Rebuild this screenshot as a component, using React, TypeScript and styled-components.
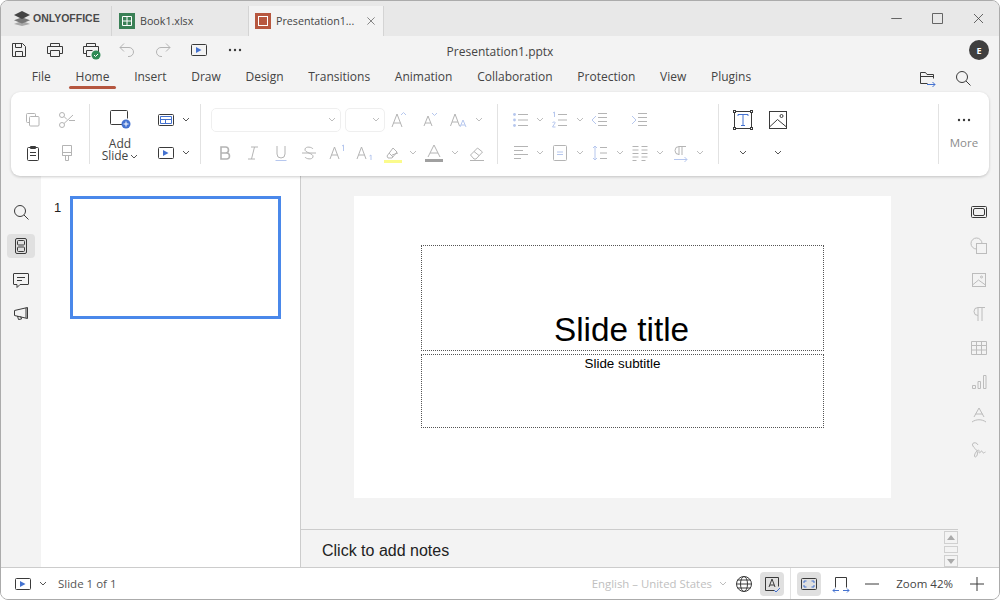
import React from 'react';
import styled, { createGlobalStyle } from 'styled-components';

const Global = createGlobalStyle`
  html, body { margin: 0; padding: 0; background: #fff; }
  body { font-family: "Open Sans", "Noto Sans", sans-serif; font-size: 12px; color: #444; }
  * { box-sizing: border-box; }
`;

const Window = styled.div`
  width: 1000px; height: 600px; display: flex; flex-direction: column; overflow: hidden;
  border: 1px solid #ababab; border-radius: 8px; background: #f3f3f3;
`;
/* title bar */
const TitleBar = styled.div`
  height: 35px; flex: none; display: flex; align-items: flex-end; background: #e8e8e8;
`;
const Logo = styled.div`
  width: 111px; height: 30px; padding: 0 0 6px 12px; display: flex; align-items: center; gap: 2px;
  font: 700 10.5px "Liberation Sans", sans-serif; color: #4a4a4a; border-right: 1px solid #d4d4d4;
`;
const DocTab = styled.div<{ $active?: boolean }>`
  width: 136px; height: 30px; padding: 0 0 0 ${(p) => (p.$active ? 6 : 7)}px; display: flex; align-items: center; gap: 5px;
  font-size: 10.7px; color: #444; white-space: nowrap;
  ${(p) => (p.$active ? 'background:#f3f3f3;border-left:1px solid #d4d4d4;border-right:1px solid #d4d4d4;' : '')}
`;
const DocName = styled.span`flex: 1;`;
const TabClose = styled.span`width: 30px; display: flex; justify-content: center;`;
const WinControls = styled.div`
  margin-left: auto; height: 35px; display: flex; align-items: center;
`;
const WinBtn = styled.div`width: 41px; height: 35px; display: flex; align-items: center; justify-content: center;`;
/* quick row */
const QuickRow = styled.div`
  height: 28px; flex: none; display: flex; align-items: center; position: relative;
`;
const QuickCell = styled.div`width: 36px; display: flex; justify-content: center;`;
const DocTitle = styled.div`
  position: absolute; left: 0; right: 0; top: 0; line-height: 31px; text-align: center;
  font-size: 12px; color: #444;
`;
const Avatar = styled.div`
  margin-left: auto; margin-right: 10px; width: 20px; height: 20px; border-radius: 50%; background: #3f3f3f;
  color: #fff; font-size: 9px; font-weight: 700; display: flex; align-items: center; justify-content: center;
`;
/* ribbon tabs */
const TabsRow = styled.div`
  height: 28px; flex: none; display: flex; align-items: center; padding: 0 0 0 18.5px;
`;
const RibbonTab = styled.div<{ $on?: boolean }>`
  position: relative; padding: 0 12.35px 3px; font-size: 12px; color: #444; white-space: nowrap;
  ${(p) => p.$on && `&::after { content: ""; position: absolute; left: 6px; right: 6px; bottom: -1px; height: 3px; border-radius: 2px; background: #b5563f; }`}
`;
const TabsRight = styled.div`
  margin-left: auto; margin-right: 26px; display: flex; align-items: center; gap: 16px;
`;
/* ribbon card */
const Card = styled.div`
  height: 84px; flex: none; margin: 0 10px; padding: 12px 0 0 5px; display: flex; background: #fff; border-radius: 9px;
  box-shadow: 0 1px 3px rgba(0, 0, 0, 0.2); position: relative; z-index: 1;
`;
const Group = styled.div<{ $w: number; $pad?: number }>`
  width: ${(p) => p.$w}px; padding-left: ${(p) => p.$pad ?? 0}px; height: 60px; flex: none;
  border-right: 1px solid #e2e2e2; display: flex;
`;
const Rows = styled.div`display: flex; flex-direction: column; margin-top: -1px;`;
const Row = styled.div`height: 33px; flex: none; display: flex; align-items: center;`;
const Cell = styled.div<{ $w: number }>`
  width: ${(p) => p.$w}px; flex: none; display: flex; align-items: center; justify-content: center;
`;
const Combo = styled.div<{ $w: number }>`
  width: ${(p) => p.$w}px; height: 24px; flex: none; margin-right: ${(p) => (p.$w > 100 ? 4 : 0)}px;
  border: 1px solid #efefef; border-radius: 5px; display: flex; align-items: center; justify-content: flex-end; padding-right: 4px;
`;
const AddSlide = styled.div`
  width: 44px; margin-right: 12px; margin-top: -1px; padding-top: 4px; display: flex; flex-direction: column; align-items: center;
  font-size: 12px; line-height: 12px; color: #444;
`;
const AddLabel = styled.div`margin-top: 7px; display: flex; flex-direction: column; align-items: center;`;
const AddLine = styled.span`display: flex; align-items: center; gap: 2px; height: 12px;`;
const MoreBtn = styled.div`
  width: 50px; height: 60px; padding-top: 6px; display: flex; flex-direction: column; align-items: center; gap: 5px;
  font-size: 11.5px; color: #8c8c8c;
`;
/* work area */
const Work = styled.div`flex: 1; min-height: 0; display: flex;`;
const LeftRail = styled.div`
  width: 40px; flex: none; padding: 24px 0 0 6px; display: flex; flex-direction: column; gap: 10px;
`;
const RailBtn = styled.div<{ $on?: boolean }>`
  width: 28px; height: 24px; border-radius: 4px; display: flex; align-items: center; justify-content: center;
  background: ${(p) => (p.$on ? '#e0e0e0' : 'transparent')};
`;
const Thumbs = styled.div`
  width: 260px; flex: none; padding: 20px 0 0 13px; display: flex; background: #fff; border-right: 1px solid #ccc;
`;
const ThumbNum = styled.div`
  width: 16px; font: 13px/24px "Liberation Sans", sans-serif; color: #222;
`;
const Thumb = styled.div`
  width: 211px; height: 123px; background: #fff; border: 3px solid #4a88ea;
`;
const Center = styled.div`flex: 1; min-width: 0; display: flex; flex-direction: column;`;
const Canvas = styled.div`
  flex: 1; min-height: 0; padding: 20px 14px 0 0; display: flex; justify-content: center; align-items: flex-start;
`;
const Slide = styled.div`
  width: 537px; height: 302px; padding-top: 49px; background: #fff; display: flex; flex-direction: column; align-items: center;
  font-family: "Liberation Sans", sans-serif; color: #000;
`;
const TitleBox = styled.div`
  width: 403px; height: 106px; border: 1px dotted #555; display: flex; align-items: flex-end; justify-content: center;
  font-size: 33.3px; line-height: 40px; padding-right: 2px;
`;
const SubBox = styled.div`
  width: 403px; height: 74px; margin-top: 3px; border: 1px dotted #555; text-align: center; font-size: 13.4px; line-height: 18px;
`;
const Notes = styled.div`
  height: 38px; flex: none; border-top: 1px solid #ccc; display: flex;
  font: 16px/41px "Liberation Sans", sans-serif; color: #222;
`;
const NotesText = styled.div`flex: 1; padding-left: 21px;`;
const NoteScroll = styled.div`
  width: 14px; flex: none; padding-top: 1px; display: flex; flex-direction: column; gap: 2px;
`;
const ScrollBtn = styled.div<{ $h: number }>`
  height: ${(p) => p.$h}px; border: 1px solid #d0d0d0; display: flex; align-items: center; justify-content: center;
`;
const RightRail = styled.div`
  width: 41px; flex: none; padding: 26px 0 0 11px; display: flex; flex-direction: column; gap: 14px;
`;
/* status bar */
const StatusBar = styled.div`
  height: 32px; flex: none; background: #fff; border-top: 1px solid #ccc; display: flex; align-items: center; color: #555; font-size: 11.5px;
`;
const StatusLeft = styled.div`display: flex; align-items: center; padding-left: 12px;`;
const SlideCount = styled.span`margin-left: 5px;`;
const StatusRight = styled.div`margin-left: auto; display: flex; align-items: center; height: 100%;`;
const Lang = styled.span`color: #c0c0c0; margin-right: 6px; white-space: nowrap; font-size: 11.4px;`;
const StatusBtn = styled.div<{ $on?: boolean; $w?: number }>`
  width: ${(p) => p.$w ?? 24}px; height: 24px; border-radius: 4px; display: flex; align-items: center; justify-content: center;
  background: ${(p) => (p.$on ? '#e0e0e0' : 'transparent')};
`;
const StatusSep = styled.div`width: 1px; height: 100%; background: #e2e2e2; margin: 0 6px 0 6px;`;
const ZoomLabel = styled.span`width: 76px; padding-right: 6px; text-align: right; color: #444;`;

const Svg = styled.svg<{ $tone?: string }>`
  display: block; flex: none; fill: none; stroke: currentColor; stroke-width: 1;
  color: ${(p) => (p.$tone === 'muted' ? '#b4b4b4' : p.$tone === 'rail' ? '#bcbcbc' : '#3a3a3a')};
  --accent: ${(p) => (p.$tone === 'muted' ? '#b6c7ee' : '#4472d0')};
  .a { stroke: var(--accent); }
  .f { fill: var(--accent); stroke: none; }
  .k { fill: currentColor; stroke: none; }
`;

const paths: Record<string, React.ReactNode> = {
  save: <><path d="M3.5 3.5h10l3 3v10h-13z" /><path d="M6.5 3.5v4h6v-4M6.5 16.5v-5h7v5" /></>,
  print: <><path d="M5.5 6.5v-3h9v3M5.5 13.5h-3v-7h15v7h-3" /><path d="M5.5 10.5h9v6h-9z" /></>,
  printok: <><path d="M5.5 6.5v-3h9v3M5.5 13.5h-3v-7h15v7h-2" /><path d="M5.5 10.5h6M5.5 10.5v6h4" /><circle cx="15" cy="15" r="4.5" fill="#2f8a55" stroke="none" /><path d="M13 15l1.5 1.5 2.5-2.5" stroke="#fff" /></>,
  undo: <><path d="M7 3.5l-4 4 4 4" /><path d="M3 7.5h9a4.5 4.5 0 0 1 0 9h-1" /></>,
  redo: <><path d="M13 3.5l4 4-4 4" /><path d="M17 7.5h-9a4.5 4.5 0 0 0 0 9h1" /></>,
  play: <><rect x="2.5" y="4.5" width="15" height="11" rx="1" /><path className="f" d="M7 7l5.5 3-5.5 3z" /></>,
  dots: <><circle className="k" cx="5" cy="10" r="1.2" /><circle className="k" cx="10" cy="10" r="1.2" /><circle className="k" cx="15" cy="10" r="1.2" /></>,
  search: <><circle cx="9" cy="9" r="5.5" /><path d="M13 13l4.5 4.5" /></>,
  folder: <><path d="M3.5 15.5v-11h5l1.5 2h6.5v4M3.5 8.5h13M3.5 15.5h7" /><path className="a" d="M10 16.5h8M15.5 14l2.5 2.5-2.5 2.5" /></>,
  copy: <><path d="M12.5 6.5v-2a1 1 0 0 0-1-1h-7a1 1 0 0 0-1 1v7a1 1 0 0 0 1 1h2" /><rect x="6.5" y="6.5" width="9.5" height="9.5" rx="1" /></>,
  cut: <><circle cx="5" cy="5" r="2.5" /><circle cx="5" cy="15" r="2.5" /><path d="M7 13.5L16 5M7 6.5l3 3M12 10.5h6" /></>,
  paste: <><rect x="4.5" y="4.5" width="11" height="13" rx="1" /><path d="M7.5 3.5h5v2h-5zM7 9.5h6M7 12.5h6" /></>,
  brush: <><path d="M5.5 2.5h9v10h-9zM5.5 9.5h9M5.5 12.5h3v5h3v-5h3" /></>,
  layout: <><rect x="2.5" y="4.5" width="15" height="11" rx="1" /><path className="a" d="M4.5 6.5h11v7h-11zM4.5 9.5h11M9.5 9.5v4" /></>,
  bold: <path strokeWidth="1.6" d="M6 4h4.5a3 3 0 0 1 0 6H6zM6 10h5.5a3 3 0 0 1 0 6H6z" />,
  italic: <path d="M8 4h7M5 16h7M11.5 4L8.5 16" />,
  under: <><path d="M6 3v8a4 4 0 0 0 8 0V3" /><path className="a" d="M4.5 17.5h11" /></>,
  strike: <path d="M14 6c-1-2-7-3-8 0-1 4 9 4 8 8-1 3-7 2-8 0M3 10h14" />,
  sup: <><path d="M3 16l4.5-12L12 16M4.5 12h6" /><path className="a" d="M15 3l1.5-1v6" /></>,
  sub: <><path d="M2 16l4.5-12L11 16M3.5 12h6" /><path className="a" d="M14.5 13l1.5-1v5" /></>,
  grow: <><path d="M2 17l5-13 5 13M3.5 13h7" /><path className="a" d="M11 5l2.5-2.5L16 5" /></>,
  shrink: <><path d="M4 16l4-10 4 10M5 13h6" /><path className="a" d="M12 3l2.5 2.5L17 3" /></>,
  caseA: <><path d="M1.5 16l4.5-12 4.5 12M3 12h6" /><path className="a" d="M11 17l3-7 3 7M12 15h4" /></>,
  high: <><path d="M4 13l6-8 4 4-5 6H5zM6 10l4 4M9 12l6-2" /><rect x="1" y="17" width="18" height="3" fill="#fbfb8c" stroke="none" /></>,
  color: <><path d="M4 14L10 2l6 12M6 10h8" /><rect x="1" y="16" width="18" height="3" fill="#a0a0a0" stroke="none" /></>,
  erase: <path d="M3.5 12l7-7 5 4-6.5 7H7zM7 8.5l5 4M3 17.5h14" />,
  bullets: <><circle className="f" cx="3.5" cy="4.5" r="1.4" /><circle className="f" cx="3.5" cy="10" r="1.4" /><circle className="f" cx="3.5" cy="15.5" r="1.4" /><path d="M7 4.5h10M7 10h10M7 15.5h10" /></>,
  numbers: <><path className="a" d="M3 3l1.5-1v5M2.5 13c1-2 3-1 2.5 0l-2.5 4h3" /><path d="M8 4.5h9M8 10h9M8 15.5h9" /></>,
  outdent: <><path className="a" d="M6 6l-4 4 4 4" /><path d="M8 3.5h9M8 7.5h9M8 11.5h9M8 15.5h9" /></>,
  indent: <><path className="a" d="M2 6l4 4-4 4" /><path d="M8 3.5h9M8 7.5h9M8 11.5h9M8 15.5h9" /></>,
  align: <path d="M3 3.5h14M3 7.5h9M3 11.5h14M3 15.5h7" />,
  valign: <><rect x="3.5" y="2.5" width="13" height="15" rx="1" /><path className="a" d="M7 9h6M7 11.5h6" /></>,
  spacing: <><path className="a" d="M5 3v14M3 5l2-2 2 2M3 15l2 2 2-2" /><path d="M10 4.5h7M10 10h7M10 15.5h7" /></>,
  cols: <path d="M2.5 3.5h6M11.5 3.5h6M2.5 7h6M11.5 7h6M2.5 10.5h6M11.5 10.5h6M2.5 14h6M11.5 14h6M2.5 17.5h4M11.5 17.5h4" />,
  para: <><path d="M9 12V3.5h7M9 3.5a4 4 0 0 0 0 8M12 3.5V12" /><path className="a" d="M4 16.5h13M14.5 14l2.5 2.5-2.5 2.5" /></>,
  textbox: <><rect x="1.5" y="1.5" width="17" height="17" /><rect x=".5" y=".5" width="2" height="2" fill="#fff" /><rect x="17.5" y=".5" width="2" height="2" fill="#fff" /><rect x=".5" y="17.5" width="2" height="2" fill="#fff" /><rect x="17.5" y="17.5" width="2" height="2" fill="#fff" /><path className="a" d="M5 6V4.5h10V6M10 4.5v10.500M8 15.500h4" /></>,
  image: <><rect x="1.5" y="1.5" width="17" height="17" /><circle cx="13.5" cy="6" r="1.5" /><path d="M1.5 17l8-7.500 9 7.500" /></>,
  rail2: <><rect x="4.5" y="2.5" width="11" height="15" rx="1.5" /><rect x="6.5" y="4.5" width="7" height="4.5" rx="1" /><rect x="6.5" y="11" width="7" height="4.5" rx="1" /></>,
  comment: <path d="M3 3.5h14a.5.5 0 0 1 .5.5v10a.5.5 0 0 1-.5.5H9l-3 3v-3H3a.5.5 0 0 1-.5-.5V4a.5.5 0 0 1 .5-.5zM6 7.5h8M6 10.5h5" />,
  horn: <path d="M16.5 3.5v11l-13-3v-5zM15 3.900v10M6.5 12l1 3.5 3-.5-.8-2.600" />,
  slideProps: <><rect x="2.5" y="4.5" width="15" height="11" rx="1" /><rect x="4.5" y="6.5" width="11" height="7" rx="1.5" /></>,
  shape: <><circle cx="7.5" cy="7.5" r="5.5" /><rect x="7.5" y="7.5" width="10" height="10" fill="#f3f3f3" /></>,
  picture: <><rect x="3.5" y="3.5" width="13" height="13" /><circle cx="12.5" cy="7" r="1" /><path d="M3.5 15l6-5 7 5" /></>,
  pilcrow: <path d="M9 17V3.5h7M9 3.5a4 4 0 0 0 0 8M13 3.5V17" />,
  table: <path d="M2.5 3.5h15v13h-15zM2.5 7.5h15M2.5 12h15M7.5 3.5v13M12.5 3.5v13" />,
  chart: <path d="M3.5 13.5h3v3h-3zM9 9.5h2.5v7H9zM14.5 3.5h2.5v13h-2.5z" />,
  art: <path d="M5 11l5-9 5 9M6.5 8h7M3 16c4-3 10-3 14 0" />,
  sign: <path d="M9 5C8 2 3 2 3.5 5c.5 3 5 4 5 8 0 4-3 5-3 3 0-3 3-6 4-6s0 3 1 3 1-2 2-2 1 2 2 2 1-1 2-1" />,
  fit: <><rect x="2.5" y="4.5" width="15" height="11" rx="1" /><path className="a" d="M5 9V7h2.500M12.500 7H15v2M15 11v2h-2.500M7.500 13H5v-2" /></>,
  fitw: <><path d="M4.5 13.5v-10h11v10" /><path className="a" d="M2 16.5h6M2 16.5l2-2M2 16.5l2 2M12 16.5h6M18 16.5l-2-2M18 16.5l-2 2" /></>,
  globe: <><circle cx="10" cy="10" r="7.5" /><ellipse cx="10" cy="10" rx="3.5" ry="7.5" /><path d="M2.5 10h15M3.5 6h13M3.5 14h13" /></>,
  spell: <><path d="M12 16.5H3.5v-13h13v9" /><path d="M7 13l3-8 3 8M8 11h4" /><path className="a" d="M12 16l2 2 4-4" /></>,
  minus: <path d="M3 10h14" />,
  plus: <path d="M3 10h14M10 3v14" />,
  close: <path d="M4 4l12 12M16 4L4 16" />,
  square: <rect x="3.5" y="3.5" width="13" height="13" />,
};

function Icon({ n, tone, size = 20 }: { n: string; tone?: string; size?: number }) {
  return (
    <Svg $tone={tone} width={size} height={size} viewBox="0 0 20 20">
      {paths[n]}
    </Svg>
  );
}

function Chev({ muted }: { muted?: boolean }) {
  return (
    <svg width="8" height="5" viewBox="0 0 8 5" fill="none" stroke={muted ? '#bdbdbd' : '#555'} style={{ display: 'block' }}>
      <path d="M1 1l3 3 3-3" />
    </svg>
  );
}

function LogoMark() {
  return (
    <svg width="18" height="16" viewBox="0 0 18 16">
      <path d="M9 10.8L1 14l8 2 8-2z" fill="#a8a8a8" />
      <path d="M9 7.2L1 10.2l8 3.3 8-3.3z" fill="#777" />
      <path d="M9 1L1 5l8 4 8-4z" fill="#444" />
    </svg>
  );
}

function SheetIcon() {
  return (
    <svg width="16" height="16" viewBox="0 0 16 16" style={{ flex: 'none' }}>
      <rect width="16" height="16" fill="#3a8056" />
      <path d="M3.5 3.5h9v9h-9zM3.5 8h9M8 3.5v9" fill="none" stroke="#fff" />
    </svg>
  );
}

function DeckIcon() {
  return (
    <svg width="16" height="16" viewBox="0 0 16 16" style={{ flex: 'none' }}>
      <rect width="16" height="16" fill="#b7573f" />
      <rect x="3.5" y="3.5" width="9" height="9" fill="none" stroke="#fff" />
    </svg>
  );
}

function AddIcon() {
  return (
    <svg width="24" height="24" viewBox="0 0 24 24" fill="none">
      <path d="M14 17.5H3.5a1 1 0 0 1-1-1v-12a1 1 0 0 1 1-1h15a1 1 0 0 1 1 1v7" stroke="#3a3a3a" />
      <circle cx="18" cy="17" r="4.5" fill="#4472d0" />
      <path d="M15.5 17h5M18 14.5v5" stroke="#fff" />
    </svg>
  );
}

const ScrollArrow = styled.span<{ $up?: boolean }>`
  width: 0; height: 0; border-left: 4px solid transparent; border-right: 4px solid transparent;
  ${(p) => (p.$up ? 'border-bottom: 5px solid #aaa;' : 'border-top: 5px solid #aaa;')}
`;

const ribbon = ['File', 'Home', 'Insert', 'Draw', 'Design', 'Transitions', 'Animation', 'Collaboration', 'Protection', 'View', 'Plugins'];
const quick: [string, string?][] = [['save'], ['print'], ['printok'], ['undo', 'muted'], ['redo', 'muted'], ['play'], ['dots']];
const rightRail = ['shape', 'picture', 'pilcrow', 'table', 'chart', 'art', 'sign'];

export default function App() {
  return (
    <>
      <Global />
      <Window>
        <TitleBar>
          <Logo>
            <LogoMark />
            <span>ONLYOFFICE</span>
          </Logo>
          <DocTab>
            <SheetIcon />
            <DocName>Book1.xlsx</DocName>
          </DocTab>
          <DocTab $active>
            <DeckIcon />
            <DocName>Presentation1...</DocName>
            <TabClose><Icon n="close" size={12} /></TabClose>
          </DocTab>
          <WinControls>
            <WinBtn><Icon n="minus" size={15} /></WinBtn>
            <WinBtn><Icon n="square" size={15} /></WinBtn>
            <WinBtn><Icon n="close" size={15} /></WinBtn>
          </WinControls>
        </TitleBar>

        <QuickRow>
          {quick.map(([n, tone]) => (
            <QuickCell key={n}><Icon n={n} tone={tone} /></QuickCell>
          ))}
          <DocTitle>Presentation1.pptx</DocTitle>
          <Avatar>E</Avatar>
        </QuickRow>

        <TabsRow>
          {ribbon.map((t) => (
            <RibbonTab key={t} $on={t === 'Home'}>{t}</RibbonTab>
          ))}
          <TabsRight>
            <Icon n="folder" />
            <Icon n="search" />
          </TabsRight>
        </TabsRow>

        <Card>
          <Group $w={74}>
            <Rows>
              <Row>
                <Cell $w={34}><Icon n="copy" tone="muted" /></Cell>
                <Cell $w={34}><Icon n="cut" tone="muted" /></Cell>
              </Row>
              <Row>
                <Cell $w={34}><Icon n="paste" /></Cell>
                <Cell $w={34}><Icon n="brush" tone="muted" /></Cell>
              </Row>
            </Rows>
          </Group>
          <Group $w={111} $pad={8}>
            <AddSlide>
              <AddIcon />
              <AddLabel>
                <AddLine>Add</AddLine>
                <AddLine>Slide <Chev /></AddLine>
              </AddLabel>
            </AddSlide>
            <Rows>
              <Row>
                <Cell $w={24}><Icon n="layout" /></Cell>
                <Cell $w={16}><Chev /></Cell>
              </Row>
              <Row>
                <Cell $w={24}><Icon n="play" /></Cell>
                <Cell $w={16}><Chev /></Cell>
              </Row>
            </Rows>
          </Group>
          <Group $w={297} $pad={10}>
            <Rows>
              <Row>
                <Combo $w={130}><Chev muted /></Combo>
                <Combo $w={40}><Chev muted /></Combo>
                <Cell $w={30}><Icon n="grow" tone="muted" /></Cell>
                <Cell $w={29}><Icon n="shrink" tone="muted" /></Cell>
                <Cell $w={30}><Icon n="caseA" tone="muted" /></Cell>
                <Cell $w={10}><Chev muted /></Cell>
              </Row>
              <Row>
                <Cell $w={28}><Icon n="bold" tone="muted" /></Cell>
                <Cell $w={28}><Icon n="italic" tone="muted" /></Cell>
                <Cell $w={28}><Icon n="under" tone="muted" /></Cell>
                <Cell $w={28}><Icon n="strike" tone="muted" /></Cell>
                <Cell $w={28}><Icon n="sup" tone="muted" /></Cell>
                <Cell $w={28}><Icon n="sub" tone="muted" /></Cell>
                <Cell $w={28}><Icon n="high" tone="muted" /></Cell>
                <Cell $w={12}><Chev muted /></Cell>
                <Cell $w={30}><Icon n="color" tone="muted" /></Cell>
                <Cell $w={12}><Chev muted /></Cell>
                <Cell $w={32}><Icon n="erase" tone="muted" /></Cell>
              </Row>
            </Rows>
          </Group>
          <Group $w={221} $pad={9}>
            <Rows>
              <Row>
                <Cell $w={28}><Icon n="bullets" tone="muted" /></Cell>
                <Cell $w={10}><Chev muted /></Cell>
                <Cell $w={30}><Icon n="numbers" tone="muted" /></Cell>
                <Cell $w={10}><Chev muted /></Cell>
                <Cell $w={30}><Icon n="outdent" tone="muted" /></Cell>
                <Cell $w={10} />
                <Cell $w={30}><Icon n="indent" tone="muted" /></Cell>
              </Row>
              <Row>
                <Cell $w={28}><Icon n="align" tone="muted" /></Cell>
                <Cell $w={10}><Chev muted /></Cell>
                <Cell $w={30}><Icon n="valign" tone="muted" /></Cell>
                <Cell $w={10}><Chev muted /></Cell>
                <Cell $w={30}><Icon n="spacing" tone="muted" /></Cell>
                <Cell $w={10}><Chev muted /></Cell>
                <Cell $w={30}><Icon n="cols" tone="muted" /></Cell>
                <Cell $w={10}><Chev muted /></Cell>
                <Cell $w={30}><Icon n="para" tone="muted" /></Cell>
                <Cell $w={10}><Chev muted /></Cell>
              </Row>
            </Rows>
          </Group>
          <Group $w={220} $pad={6}>
            <Rows>
              <Row>
                <Cell $w={35}><Icon n="textbox" /></Cell>
                <Cell $w={35}><Icon n="image" /></Cell>
              </Row>
              <Row>
                <Cell $w={35}><Chev /></Cell>
                <Cell $w={35}><Chev /></Cell>
              </Row>
            </Rows>
          </Group>
          <MoreBtn>
            <Icon n="dots" />
            <span>More</span>
          </MoreBtn>
        </Card>

        <Work>
          <LeftRail>
            <RailBtn><Icon n="search" /></RailBtn>
            <RailBtn $on><Icon n="rail2" /></RailBtn>
            <RailBtn><Icon n="comment" /></RailBtn>
            <RailBtn><Icon n="horn" /></RailBtn>
          </LeftRail>
          <Thumbs>
            <ThumbNum>1</ThumbNum>
            <Thumb />
          </Thumbs>
          <Center>
            <Canvas>
              <Slide>
                <TitleBox>Slide title</TitleBox>
                <SubBox>Slide subtitle</SubBox>
              </Slide>
            </Canvas>
            <Notes>
              <NotesText>Click to add notes</NotesText>
              <NoteScroll>
                <ScrollBtn $h={13}><ScrollArrow $up /></ScrollBtn>
                <ScrollBtn $h={7} />
                <ScrollBtn $h={12}><ScrollArrow /></ScrollBtn>
              </NoteScroll>
            </Notes>
          </Center>
          <RightRail>
            <Icon n="slideProps" />
            {rightRail.map((n) => (
              <Icon key={n} n={n} tone="rail" />
            ))}
          </RightRail>
        </Work>

        <StatusBar>
          <StatusLeft>
            <Icon n="play" />
            <Cell $w={20}><Chev /></Cell>
            <SlideCount>Slide 1 of 1</SlideCount>
          </StatusLeft>
          <StatusRight>
            <Lang>English – United States</Lang>
            <Cell $w={10}><Chev muted /></Cell>
            <StatusBtn $w={32}><Icon n="globe" /></StatusBtn>
            <StatusBtn $on><Icon n="spell" /></StatusBtn>
            <StatusSep />
            <StatusBtn $on><Icon n="fit" /></StatusBtn>
            <StatusBtn $w={40}><Icon n="fitw" /></StatusBtn>
            <StatusBtn $w={22}><Icon n="minus" /></StatusBtn>
            <ZoomLabel>Zoom 42%</ZoomLabel>
            <StatusBtn $w={36}><Icon n="plus" /></StatusBtn>
            <Cell $w={4} />
          </StatusRight>
        </StatusBar>
      </Window>
    </>
  );
}
